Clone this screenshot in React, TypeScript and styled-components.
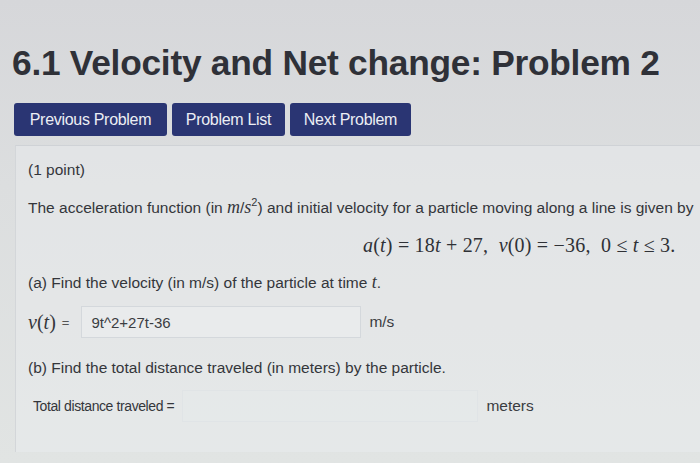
import React from "react";
import styled, { createGlobalStyle } from "styled-components";

const Global = createGlobalStyle`
  html, body { margin: 0; padding: 0; }
  body {
    width: 700px; height: 463px; overflow: hidden;
    background: linear-gradient(180deg, #d6d7da 0%, #dcdedf 40%, #e1e4e3 100%);
    font-family: "Liberation Sans", Arial, sans-serif;
    color: #34363b;
  }
`;

const Page = styled.div`
  padding: 43px 0 0 12px;
`;

const Title = styled.h1`
  margin: 0;
  font-size: 35.3px;
  font-weight: bold;
  color: #2f3138;
  letter-spacing: -0.25px;
  line-height: 40px;
`;

const Toolbar = styled.div`
  display: flex;
  gap: 5px;
  margin: 20px 0 0 2px;
`;

const NavButton = styled.button<{ $w: number }>`
  width: ${(p) => p.$w}px;
  height: 33px;
  background: #2a3573;
  color: #eceef4;
  border: none;
  border-radius: 3px;
  font-family: "Liberation Sans", Arial, sans-serif;
  font-size: 16px;
  padding: 0;
  letter-spacing: -0.3px;
`;

const Panel = styled.div`
  margin: 9px 0 0 3px;
  border-top: 1px solid #cfd2d6;
  border-left: 1px solid #d3d6d9;
  background: rgba(236, 238, 239, 0.45);
  padding: 14px 0 30px 12px;
  font-size: 15.5px;
`;

const Line = styled.div<{ $mt?: number }>`
  margin-top: ${(p) => p.$mt ?? 0}px;
  line-height: 20px;
  height: 20px;
  white-space: nowrap;
`;

const M = styled.span<{ $size?: number }>`
  font-family: "Liberation Serif", "DejaVu Serif", serif;
  font-style: italic;
  font-size: ${(p) => p.$size ?? 18}px;
  letter-spacing: 0;
`;

const Sup = styled.sup`
  font-size: 11px;
  line-height: 0;
  vertical-align: 7px;
`;

const Eq = styled.div`
  margin-top: 16px;
  padding-left: 335px;
  font-family: "Liberation Serif", "DejaVu Serif", serif;
  font-size: 20px;
  letter-spacing: 0.2px;
  line-height: 24px;
  white-space: nowrap;
  color: #2f3136;
`;

const I = styled.i``;

const AnswerRow = styled.div<{ $mt: number }>`
  display: flex;
  align-items: center;
  margin-top: ${(p) => p.$mt}px;
  white-space: nowrap;
`;

const Paren = styled.span`
  font-family: "Liberation Serif", "DejaVu Serif", serif;
  font-size: 20px;
`;

const Eqs = styled.span`
  margin: 0 12px 0 6px;
  font-size: 13px;
  color: #555;
`;

const Input = styled.div<{ $w: number; $faint?: boolean }>`
  width: ${(p) => p.$w}px;
  height: 32px;
  box-sizing: border-box;
  border: 1px solid ${(p) => (p.$faint ? "rgba(210,216,222,0.25)" : "#d4d8dc")};
  background: ${(p) => (p.$faint ? "rgba(232,236,238,0.18)" : "rgba(236,239,240,0.6)")};
  padding: 0 0 0 9px;
  display: flex;
  align-items: center;
  font-size: 15px;
  color: #3b3d42;
`;

const Unit = styled.span<{ $ml: number }>`
  margin-left: ${(p) => p.$ml}px;
  color: #3a3c41;
`;

const Label = styled.span`
  margin-left: 5px;
  font-size: 14px;
  letter-spacing: -0.4px;
`;

export default function App() {
  return (
    <>
      <Global />
      <Page>
        <Title>6.1 Velocity and Net change: Problem 2</Title>
        <Toolbar>
          <NavButton $w={153}>Previous Problem</NavButton>
          <NavButton $w={113}>Problem List</NavButton>
          <NavButton $w={121}>Next Problem</NavButton>
        </Toolbar>
        <Panel>
          <Line>(1 point)</Line>
          <Line $mt={17}>
            The acceleration function (in <M>m</M>/<M>s</M>
            <Sup>2</Sup>) and initial velocity for a particle moving along a line is given by
          </Line>
          <Eq>
            <I>a</I>(<I>t</I>) = 18<I>t</I> + 27, &nbsp;<I>v</I>(0) = −36, &nbsp;0 ≤ <I>t</I> ≤ 3.
          </Eq>
          <Line $mt={15}>
            (a) Find the velocity (in m/s) of the particle at time <M>t</M>.
          </Line>
          <AnswerRow $mt={14}>
            <M $size={20}>v</M>
            <Paren>(</Paren>
            <M $size={20}>t</M>
            <Paren>)</Paren>
            <Eqs>=</Eqs>
            <Input $w={280}>9t^2+27t-36</Input>
            <Unit $ml={8}>m/s</Unit>
          </AnswerRow>
          <Line $mt={20}>(b) Find the total distance traveled (in meters) by the particle.</Line>
          <AnswerRow $mt={12}>
            <Label>Total distance traveled =</Label>
            <Input $w={296} $faint style={{ marginLeft: 8 }} />
            <Unit $ml={8}>meters</Unit>
          </AnswerRow>
        </Panel>
      </Page>
    </>
  );
}
